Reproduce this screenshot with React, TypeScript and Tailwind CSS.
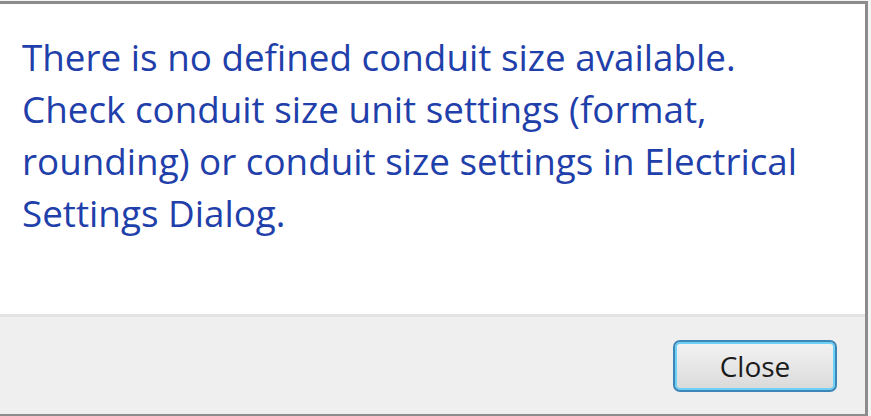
export default function App() {
  return (
    <div className="w-[871px] h-[416px] bg-[#f4f4f4] overflow-hidden">
      <div
        className="w-[868px] h-[415px] mt-[1px] flex flex-col border-t-[3px] border-r-[3px] border-b-[2px] border-[#8c8c8c] bg-white"
        style={{ fontFamily: '"Open Sans", "Noto Sans", sans-serif' }}
      >
        {/* message */}
        <div className="flex-1 pl-[22px] pt-[27px] text-[#1f40aa] text-[36.8px] leading-[52px]">
          <p>There is no defined conduit size available.</p>
          <p>Check conduit size unit settings (format,</p>
          <p>rounding) or conduit size settings in Electrical</p>
          <p>Settings Dialog.</p>
        </div>

        {/* footer */}
        <div className="h-[100px] border-t-[3px] border-[#e3e3e3] bg-[#efefef] flex items-center justify-end pr-[28px]">
          <button className="w-[164px] h-[52px] rounded-[7px] border-2 border-[#3d87b8] shadow-[inset_0_0_0_2px_#6fd0f5] bg-gradient-to-b from-[#f3f3f3] to-[#dadada] text-[#1b1b1b] text-[28px]">
            Close
          </button>
        </div>
      </div>
    </div>
  );
}
